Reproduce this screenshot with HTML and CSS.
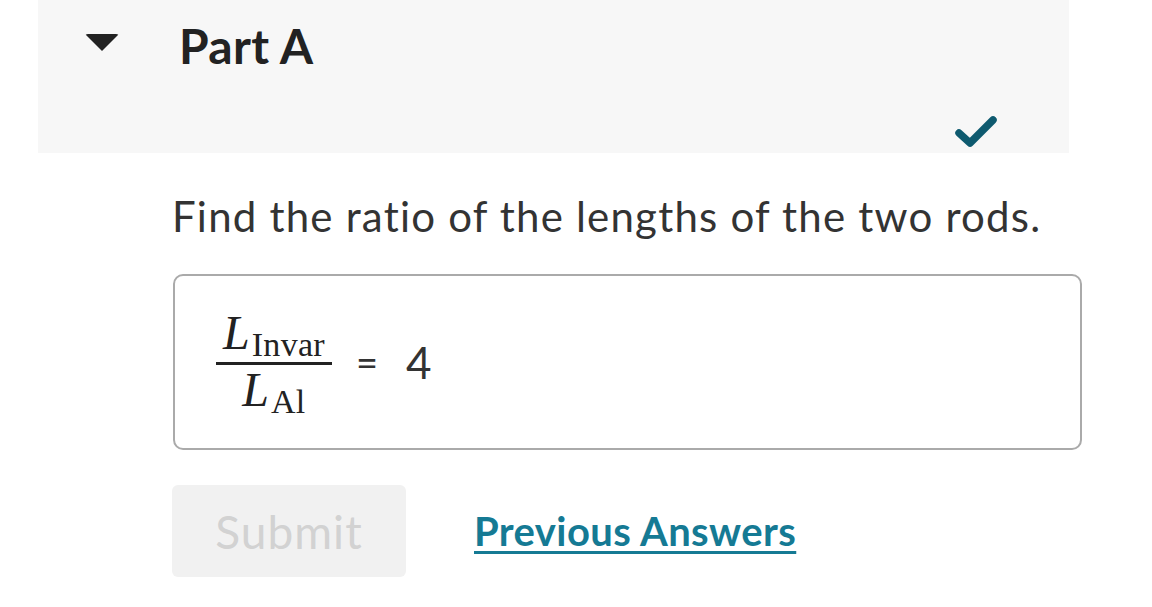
FILE: index.html
```html
<!DOCTYPE html>
<html lang="en">
<head>
<meta charset="utf-8">
<title>Part A</title>
<link rel="stylesheet" href="styles.css">
</head>
<body>
<section class="part">
  <header class="part-header">
    <div class="part-title-row">
      <span class="caret" aria-hidden="true"></span>
      <h2 class="part-title">Part A</h2>
    </div>
    <div class="part-status">
      <svg class="check" width="44" height="34" viewBox="0 0 44 34" aria-hidden="true">
        <path d="M5 18 L16 28 L39 5" fill="none" stroke="#0e5a6f" stroke-width="7.5" stroke-linecap="round" stroke-linejoin="round"/>
      </svg>
    </div>
  </header>
  <div class="part-body">
    <p class="prompt">Find the ratio of the lengths of the two rods.</p>
    <div class="answer-box">
      <span class="frac">
        <span class="num"><i class="var">L</i><sub>Invar</sub></span>
        <span class="den"><i class="var">L</i><sub>Al</sub></span>
      </span>
      <span class="eq">=</span>
      <span class="value">4</span>
    </div>
    <div class="actions">
      <button class="submit" disabled>Submit</button>
      <a class="prev" href="#">Previous Answers</a>
    </div>
  </div>
</section>
</body>
</html>
```
FILE: styles.css
```css
html, body {
  margin: 0;
  padding: 0;
  background: #ffffff;
  font-family: "Lato", "Open Sans", sans-serif;
  color: #333333;
}
.part {
  width: 1152px;
}
.part-header {
  margin-left: 38px;
  width: 1031px;
  height: 153px;
  background: #f7f7f7;
  display: flex;
  flex-direction: column;
  box-sizing: border-box;
}
.part-title-row {
  display: flex;
  align-items: center;
  height: 90px;
}
.caret {
  width: 0;
  height: 0;
  margin-left: 47px;
  border-left: 17px solid transparent;
  border-right: 17px solid transparent;
  border-top: 17px solid #222222;
  border-radius: 3px;
  margin-top: -6px;
}
.part-title {
  margin: 0 0 0 60px;
  font-size: 48px;
  font-weight: 700;
  color: #222222;
  letter-spacing: 0.3px;
}
.part-status {
  display: flex;
  justify-content: flex-end;
  padding-right: 71px;
  margin-top: 25px;
}
.part-body {
  padding-left: 172px;
  width: 910px;
}
.prompt {
  margin: 38px 0 0 0;
  font-size: 42px;
  line-height: 50px;
  letter-spacing: 1.2px;
  color: #333333;
}
.answer-box {
  margin-top: 33px;
  margin-left: 1px;
  height: 176px;
  box-sizing: border-box;
  border: 2px solid #aaaaaa;
  border-radius: 10px;
  display: flex;
  align-items: center;
  padding-left: 41px;
}
.frac {
  display: inline-flex;
  flex-direction: column;
  align-items: stretch;
  text-align: center;
  font-family: "Liberation Serif", "DejaVu Serif", serif;
  color: #222222;
  margin-top: -2px;
}
.num, .den {
  font-size: 48px;
  line-height: 50px;
  padding: 0 7px;
}
.num {
  border-bottom: 3px solid #222222;
  padding-bottom: 4px;
}
.den {
  padding-top: 0;
}
.var {
  font-style: italic;
  margin-right: 2px;
}
.frac sub {
  font-size: 34px;
  vertical-align: -7px;
  line-height: 0;
  letter-spacing: 0.3px;
}
.eq {
  font-size: 38px;
  margin-left: 24px;
  color: #333333;
}
.value {
  font-size: 44px;
  margin-left: 28px;
  color: #333333;
}
.actions {
  display: flex;
  align-items: center;
  margin-top: 35px;
}
.submit {
  width: 234px;
  height: 92px;
  border: none;
  border-radius: 6px;
  background: #f1f1f1;
  color: #d2d2d2;
  font-family: "Lato", "Open Sans", sans-serif;
  font-size: 46px;
  letter-spacing: 1px;
  padding: 0;
}
.prev {
  margin-left: 68px;
  font-size: 40px;
  font-weight: 700;
  letter-spacing: 0.4px;
  color: #157a94;
  text-decoration: underline;
  text-decoration-thickness: 3px;
  text-underline-offset: 5px;
}
```
